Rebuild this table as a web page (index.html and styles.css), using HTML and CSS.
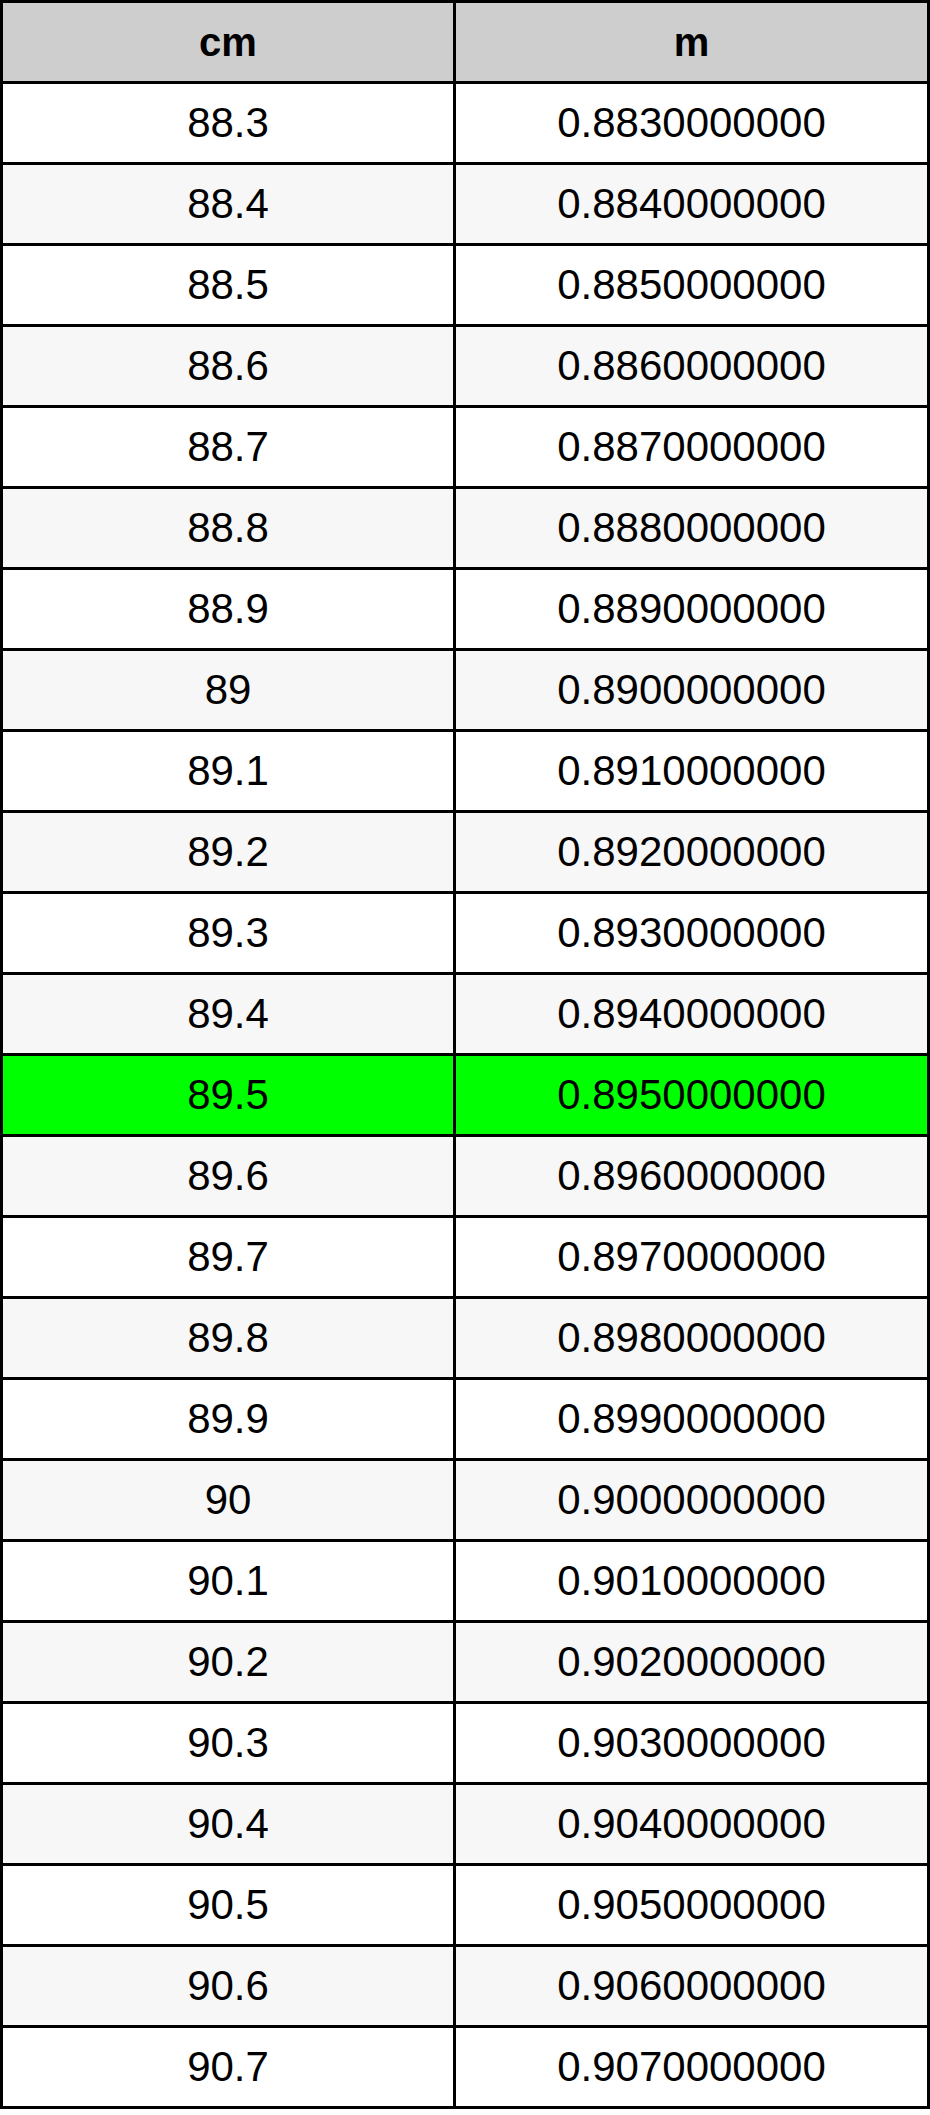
FILE: index.html
```html
<!DOCTYPE html>
<html>
<head>
<meta charset="utf-8">
<link rel="stylesheet" href="styles.css">
</head>
<body>
<table class="conv">
<thead>
<tr><th class="c1">cm</th><th class="c2">m</th></tr>
</thead>
<tbody>
<tr><td>88.3</td><td>0.8830000000</td></tr>
<tr><td>88.4</td><td>0.8840000000</td></tr>
<tr><td>88.5</td><td>0.8850000000</td></tr>
<tr><td>88.6</td><td>0.8860000000</td></tr>
<tr><td>88.7</td><td>0.8870000000</td></tr>
<tr><td>88.8</td><td>0.8880000000</td></tr>
<tr><td>88.9</td><td>0.8890000000</td></tr>
<tr><td>89</td><td>0.8900000000</td></tr>
<tr><td>89.1</td><td>0.8910000000</td></tr>
<tr><td>89.2</td><td>0.8920000000</td></tr>
<tr><td>89.3</td><td>0.8930000000</td></tr>
<tr><td>89.4</td><td>0.8940000000</td></tr>
<tr class="hl"><td>89.5</td><td>0.8950000000</td></tr>
<tr><td>89.6</td><td>0.8960000000</td></tr>
<tr><td>89.7</td><td>0.8970000000</td></tr>
<tr><td>89.8</td><td>0.8980000000</td></tr>
<tr><td>89.9</td><td>0.8990000000</td></tr>
<tr><td>90</td><td>0.9000000000</td></tr>
<tr><td>90.1</td><td>0.9010000000</td></tr>
<tr><td>90.2</td><td>0.9020000000</td></tr>
<tr><td>90.3</td><td>0.9030000000</td></tr>
<tr><td>90.4</td><td>0.9040000000</td></tr>
<tr><td>90.5</td><td>0.9050000000</td></tr>
<tr><td>90.6</td><td>0.9060000000</td></tr>
<tr><td>90.7</td><td>0.9070000000</td></tr>
</tbody>
</table>
</body>
</html>
```
FILE: styles.css
```css
html, body {
  margin: 0;
  padding: 0;
  background: #ffffff;
}
.conv {
  border-collapse: separate;
  border-spacing: 3px;
  background: #000000;
  width: 930px;
  table-layout: fixed;
  font-family: "Liberation Sans", Arial, sans-serif;
  color: #000000;
}
.conv th, .conv td {
  height: 78px;
  padding: 0;
  text-align: center;
  vertical-align: middle;
  font-size: 42px;
  line-height: 78px;
  background: #ffffff;
}
.conv th {
  background: #cecece;
  font-weight: bold;
  font-size: 40px;
}
.conv .c1 {
  width: 450px;
}
.conv .c2 {
  width: 471px;
}
.conv tbody tr:nth-child(even) td {
  background: #f7f7f7;
}
.conv tbody tr.hl td {
  background: #00ff00;
}
```
